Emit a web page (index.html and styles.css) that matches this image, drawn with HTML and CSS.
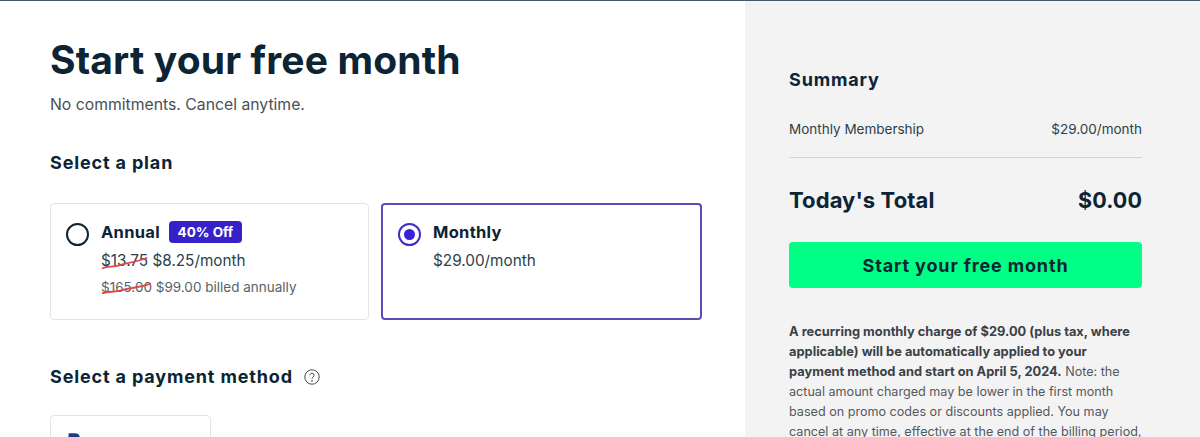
FILE: index.html
```html
<!DOCTYPE html>
<html lang="en">
<head>
<meta charset="utf-8">
<title>Start your free month</title>
<link rel="stylesheet" href="styles.css">
</head>
<body>
<div class="page">
  <main class="main">
    <h1 class="title">Start your free month</h1>
    <p class="subtitle">No commitments. Cancel anytime.</p>
    <h2 class="section-title">Select a plan</h2>
    <div class="plans">
      <div class="plan">
        <span class="radio"></span>
        <div class="plan-body">
          <div class="plan-head"><span class="plan-name">Annual</span><span class="badge">40% Off</span></div>
          <div class="plan-price"><span class="old">$13.75<svg class="strike" viewBox="0 0 48 12" preserveAspectRatio="none"><path d="M1 10.500 C8 8 12 10 20 7.500 C28 5 34 6 47 1.500"/></svg></span> $8.25/month</div>
          <div class="plan-note"><span class="old">$165.00<svg class="strike" viewBox="0 0 48 12" preserveAspectRatio="none"><path d="M1 10.500 C8 8 12 10 20 7.500 C28 5 34 6 47 1.500"/></svg></span> $99.00 billed annually</div>
        </div>
      </div>
      <div class="plan plan-selected">
        <span class="radio radio-on"></span>
        <div class="plan-body">
          <div class="plan-head"><span class="plan-name">Monthly</span></div>
          <div class="plan-price">$29.00/month</div>
        </div>
      </div>
    </div>
    <h2 class="section-title payment-title">Select a payment method
      <svg class="help" viewBox="0 0 16 16"><circle cx="8" cy="8" r="7.2"/><path d="M5.900 6.300a2.100 2.100 0 1 1 3.300 1.700c-.8.5-1.200.9-1.200 1.800"/><circle class="dot" cx="8" cy="11.900" r=".8"/></svg>
    </h2>
    <div class="pay-card">
      <svg class="paypal" viewBox="0 0 16 20"><path d="M2 0h7c4 0 6 2 5.400 5.500C13.800 9 11.500 11 8 11H5.500L4.500 18H0z"/></svg>
    </div>
  </main>
  <aside class="side">
    <h2 class="side-title">Summary</h2>
    <div class="row"><span>Monthly Membership</span><span>$29.00/month</span></div>
    <div class="total"><span>Today's Total</span><span class="total-amount">$0.00</span></div>
    <button class="cta">Start your free month</button>
    <p class="legal"><strong>A recurring monthly charge of $29.00 (plus tax, where applicable) will be automatically applied to your payment method and start on April 5, 2024.</strong> Note: the actual amount charged may be lower in the first month based on promo codes or discounts applied. You may cancel at any time, effective at the end of the billing period,</p>
  </aside>
</div>
</body>
</html>
```
FILE: styles.css
```css
* { box-sizing: border-box; }
html, body { margin: 0; height: 437px; overflow: hidden; background: #fff; }
body { font-family: "Inter", "Liberation Sans", sans-serif; color: #0c2434; }
.page { display: flex; height: 437px; border-top: 1px solid #44586a; overflow: hidden; }
.main { width: 745px; flex: none; padding: 36px 43px 0 50px; }
.title { margin: 0; font-size: 39px; line-height: 46px; font-weight: 700; letter-spacing: 0.15px; }
.subtitle { margin: 11px 0 0; font-size: 15.750px; line-height: 22px; color: #4a4f55; }
.section-title { margin: 35px 0 0; font-size: 18px; line-height: 24px; font-weight: 700; letter-spacing: 0.85px; }
.plans { display: flex; gap: 12px; margin-top: 28px; }
.plan { width: 319px; flex: none; height: 117px; border: 1px solid #e4e4e4; border-radius: 4px; padding: 17px 15px; display: flex; gap: 12px; background: #fff; }
.plan-selected { width: 321px; border: 2px solid #5b4db5; padding: 16px 15px; }
.radio { flex: none; width: 23px; height: 23px; margin-top: 2px; border: 2.500px solid #0c2434; border-radius: 50%; }
.radio-on { border-color: #3f2bc9; position: relative; }
.radio-on::after { content: ""; position: absolute; inset: 4px; border-radius: 50%; background: #3b22d6; }
.plan-head { display: flex; align-items: center; gap: 9px; height: 22px; }
.plan-name { font-size: 16.500px; font-weight: 700; letter-spacing: 0.3px; }
.badge { background: #3621c9; color: #fff; font-size: 13.500px; font-weight: 700; border-radius: 4px; padding: 0 8.500px; line-height: 22px; }
.plan-price { font-size: 15.300px; line-height: 22px; margin-top: 7px; color: #2c3f4c; }
.plan-note { font-size: 13.500px; line-height: 20px; margin-top: 5px; color: #5a5f66; }
.old { position: relative; display: inline-block; }
.strike { position: absolute; left: 0; top: 25%; width: 100%; height: 65%; overflow: visible; }
.strike path { fill: none; stroke: #e0484f; stroke-width: 1.800; vector-effect: non-scaling-stroke; }
.payment-title { margin-top: 45px; display: flex; align-items: center; gap: 11px; }
.help { width: 16px; height: 16px; fill: none; stroke: #454c52; stroke-width: 1; }
.help .dot { fill: #454c52; stroke: none; }
.pay-card { width: 161px; height: 80px; margin-top: 26px; border: 1px solid #e4e4e4; border-radius: 4px; padding: 16px 16px 0; }
.paypal { width: 14px; height: 20px; fill: #1f3a80; display: block; }
.side { flex: 1; background: #f3f3f3; padding: 67px 58px 0 44px; }
.side-title { margin: 0; font-size: 18px; line-height: 24px; font-weight: 700; letter-spacing: 0.85px; }
.row { display: flex; justify-content: space-between; margin-top: 27px; padding-bottom: 18px; border-bottom: 1px solid #d4d4d4; font-size: 13.500px; line-height: 20px; color: #2c3f4c; }
.total { display: flex; justify-content: space-between; margin-top: 26px; font-size: 22px; line-height: 32px; font-weight: 700; letter-spacing: 0.1px; }
.total-amount { font-size: 21.500px; }
.cta { display: block; width: 100%; height: 46px; margin-top: 26px; border: 0; border-radius: 4px; background: #00ff85; color: #0c2434; font: 700 18px "Inter", "Liberation Sans", sans-serif; letter-spacing: 0.85px; }
.legal { margin: 34px 0 0; font-size: 12.600px; line-height: 20px; color: #55595e; }
.legal strong { color: #3a4148; font-weight: 700; font-size: 12.850px; }
```
